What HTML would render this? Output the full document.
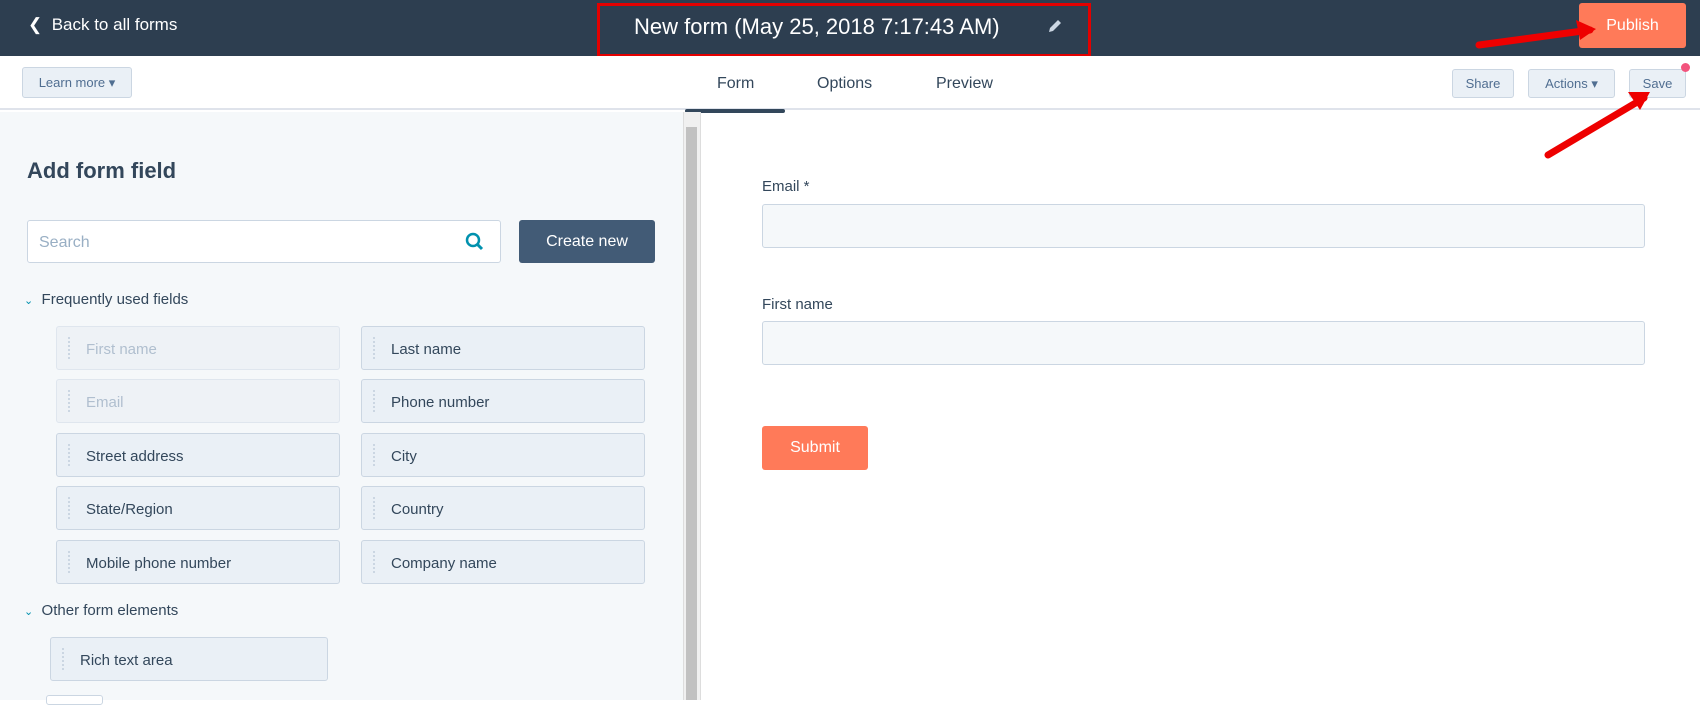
<!DOCTYPE html>
<html><head><meta charset="utf-8"><style>
*{box-sizing:border-box;margin:0;padding:0}
body{width:1700px;height:700px;overflow:hidden;font-family:"Liberation Sans",sans-serif;background:#fff;position:relative;color:#33475b}
.a{position:absolute}
.hdr{left:0;top:0;width:1700px;height:56px;background:#2d3e50}
.btn{position:absolute;background:#eaf0f6;border:1px solid #cbd6e2;border-radius:3px;color:#506e91;font-size:13px;display:flex;align-items:center;justify-content:center}
.fld{position:absolute;width:284px;height:44px;background:#eaf0f6;border:1px solid #cbd6e2;border-radius:3px;font-size:15px;color:#33475b;padding-left:29px;line-height:46px}
.fld:before{content:"";position:absolute;left:11px;top:10px;width:2px;height:22px;border-left:2px dotted #cbd6e2}
.fld.d{background:#eef2f6;border-color:#dfe6ee;color:#b0bfcf}
.inp{position:absolute;left:762px;width:883px;height:44px;background:#f5f8fa;border:1px solid #cbd6e2;border-radius:3px}
.lbl{position:absolute;left:762px;font-size:15px;color:#33475b}
</style></head><body>
<div class="a hdr"></div>
<div class="a" style="left:28px;top:15px;color:#fff;font-size:17px">&#10094;&nbsp; Back to all forms</div>
<div class="a" style="left:597px;top:3px;width:494px;height:54px;border:3px solid #e30000"></div>
<div class="a" style="left:634px;top:14px;color:#fff;font-size:22px">New form (May 25, 2018 7:17:43 AM)</div>
<svg class="a" style="left:1045px;top:16px" width="20" height="20" viewBox="0 0 20 20"><path d="M4 16l1-4 8-8 3 3-8 8z" fill="#cbd6e2"/></svg>
<div class="a" style="left:1579px;top:3px;width:107px;height:45px;background:#ff7a59;border-radius:3px;color:#fff;font-size:16px;display:flex;align-items:center;justify-content:center">Publish</div>
<div class="a" style="left:0;top:56px;width:1700px;height:54px;background:#fff;border-bottom:2px solid #dfe3eb"></div>
<div class="btn" style="left:22px;top:67px;width:110px;height:31px">Learn more ▾</div>
<div class="a" style="left:717px;top:75px;font-size:16px;color:#33475b">Form</div>
<div class="a" style="left:817px;top:75px;font-size:16px;color:#33475b">Options</div>
<div class="a" style="left:936px;top:75px;font-size:16px;color:#33475b">Preview</div>
<div class="a" style="left:685px;top:109px;width:100px;height:4px;background:#33475b;border-radius:2px"></div>
<div class="btn" style="left:1452px;top:69px;width:62px;height:29px">Share</div>
<div class="btn" style="left:1528px;top:69px;width:87px;height:29px">Actions ▾</div>
<div class="btn" style="left:1629px;top:69px;width:57px;height:29px">Save</div>
<div class="a" style="left:1681px;top:63px;width:9px;height:9px;background:#f2547d;border-radius:50%"></div>
<div class="a" style="left:0;top:112px;width:683px;height:588px;background:#f5f8fa"></div>
<div class="a" style="left:683px;top:112px;width:18px;height:588px;background:#f0f0f0;border-left:1px solid #ddd;border-right:1px solid #ddd"></div>
<div class="a" style="left:686px;top:127px;width:11px;height:573px;background:#c1c1c1"></div>
<div class="a" style="left:27px;top:158px;font-size:22px;font-weight:bold;color:#33475b">Add form field</div>
<div class="a" style="left:27px;top:220px;width:474px;height:43px;background:#fff;border:1px solid #cbd6e2;border-radius:3px;font-size:16px;color:#99afc4;padding:13px 11px">Search</div>
<svg class="a" style="left:465px;top:232px" width="20" height="20" viewBox="0 0 20 20"><circle cx="8" cy="8" r="6" fill="none" stroke="#0091ae" stroke-width="2.5"/><path d="M12 12l5 5" stroke="#0091ae" stroke-width="3"/></svg>
<div class="a" style="left:519px;top:220px;width:136px;height:43px;background:#425b76;border-radius:3px;color:#fff;font-size:16px;display:flex;align-items:center;justify-content:center">Create new</div>
<div class="a" style="left:24px;top:291px;font-size:15px;color:#33475b"><span style="color:#0091ae;font-size:11px">&#8964;</span>&nbsp; Frequently used fields</div>
<div class="fld d" style="left:56px;top:326px">First name</div>
<div class="fld" style="left:361px;top:326px">Last name</div>
<div class="fld d" style="left:56px;top:379px">Email</div>
<div class="fld" style="left:361px;top:379px">Phone number</div>
<div class="fld" style="left:56px;top:433px">Street address</div>
<div class="fld" style="left:361px;top:433px">City</div>
<div class="fld" style="left:56px;top:486px">State/Region</div>
<div class="fld" style="left:361px;top:486px">Country</div>
<div class="fld" style="left:56px;top:540px">Mobile phone number</div>
<div class="fld" style="left:361px;top:540px">Company name</div>
<div class="a" style="left:24px;top:602px;font-size:15px;color:#33475b"><span style="color:#0091ae;font-size:11px">&#8964;</span>&nbsp; Other form elements</div>
<div class="fld" style="left:50px;top:637px;width:278px">Rich text area</div>
<div class="a" style="left:46px;top:695px;width:57px;height:10px;background:#fff;border:1px solid #cbd6e2;border-radius:3px"></div>
<div class="lbl" style="top:178px">Email *</div>
<div class="inp" style="top:204px"></div>
<div class="lbl" style="top:296px">First name</div>
<div class="inp" style="top:321px"></div>
<div class="a" style="left:762px;top:426px;width:106px;height:44px;background:#ff7a59;border-radius:3px;color:#fff;font-size:16px;display:flex;align-items:center;justify-content:center">Submit</div>
<svg class="a" style="left:0;top:0" width="1700" height="700">
<path d="M1479 45 L1590 30" stroke="#e00" stroke-width="7" stroke-linecap="round"/>
<path d="M1596 29 L1576 20 L1580 40 Z" fill="#e00"/>
<path d="M1548 155 L1644 98" stroke="#e00" stroke-width="7" stroke-linecap="round"/>
<path d="M1650 92 L1628 92 L1640 110 Z" fill="#e00"/>
</svg>
</body></html>
